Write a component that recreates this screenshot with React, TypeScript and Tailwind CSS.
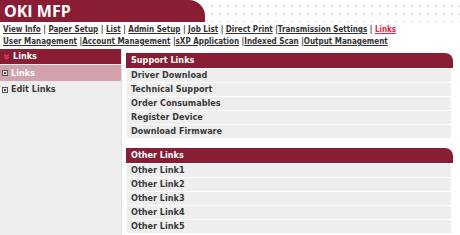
import React from "react";

const MAROON = "bg-[#881d33]";

const row1 = ["View Info", "Paper Setup", "List", "Admin Setup", "Job List", "Direct Print"];
const row2 = ["User Management", "Account Management", "sXP Application", "Indexed Scan", "Output Management"];

function NavLink({ children, active }: { children: React.ReactNode; active?: boolean }) {
  return (
    <a className={active ? "text-[#e8283f] underline" : "text-[#333] underline"} href="#">
      {children}
    </a>
  );
}

function BoxIcon() {
  return (
    <svg width="6" height="6" viewBox="0 0 6 6" className="shrink-0">
      <rect x="0.5" y="0.5" width="5" height="5" fill="#e8e8e8" stroke="#555" />
      <rect x="2" y="2" width="2" height="2" fill="#555" />
    </svg>
  );
}

function Panel({ title, items }: { title: string; items: string[] }) {
  return (
    <div className="flex flex-col">
      <div className={`${MAROON} h-[15px] rounded-tr-[8px] pl-[5px] text-white flex items-center`}>{title}</div>
      <div className="flex flex-col pr-[2px] pl-[1px]">
        {items.map((it) => (
          <div key={it} className="h-[13px] mt-[1px] bg-[#eeeeee] pl-[4px] flex items-center text-[#3a3a3a]">
            {it}
          </div>
        ))}
      </div>
    </div>
  );
}

export default function App() {
  return (
    <div
      className="w-[460px] h-[235px] bg-white overflow-hidden font-bold text-[9px] leading-none"
      style={{ fontFamily: '"DejaVu Sans Condensed", "DejaVu Sans", sans-serif' }}
    >
      <div className="flex h-[22px]">
        <div
          className={`${MAROON} w-[205px] rounded-tr-[16px] pl-[4px] flex items-center text-white text-[16px] font-['Open_Sans',sans-serif]`}
        >
          OKI MFP
        </div>
        <div className="flex-1 bg-[radial-gradient(#d8d8d8_0.8px,transparent_1px)] bg-[length:8px_8px] bg-[position:3px_2px]" />
      </div>

      <div className="px-[3px] pt-[2px] leading-[12px] text-[8px]">
        <div className="whitespace-nowrap">
          {row1.map((t) => (
            <span key={t}>
              <NavLink>{t}</NavLink>
              <span className="text-[#333]">{t === "Direct Print" ? " |" : " | "}</span>
            </span>
          ))}
          <NavLink>Transmission Settings</NavLink>
          <span className="text-[#333]"> | </span>
          <NavLink active>Links</NavLink>
        </div>
        <div className="whitespace-nowrap">
          {row2.map((t, i) => (
            <span key={t}>
              <NavLink>{t}</NavLink>
              {i < row2.length - 1 && <span className="text-[#333]"> |</span>}
            </span>
          ))}
        </div>
      </div>

      <div className="flex mt-[1px] h-[187px]">
        <div className="w-[122px] bg-[#eeeeee] border-r border-b border-[#e2e2e2] flex flex-col">
          <div className={`${MAROON} h-[15px] flex items-center gap-[4px] pl-[4px] text-white`}>
            <svg width="5" height="6" viewBox="0 0 5 6">
              <path d="M0 0.5 L2.5 2.5 L5 0.5 M0 3 L2.5 5 L5 3" fill="none" stroke="#f0405a" strokeWidth="1.3" />
            </svg>
            Links
          </div>
          <div className="h-[16px] bg-[#d3a2ab] flex items-center gap-[3px] pl-[2px] text-white mt-[1px]">
            <BoxIcon />
            Links
          </div>
          <div className="h-[17px] flex items-center gap-[3px] pl-[2px] text-[#3a3a3a]">
            <BoxIcon />
            Edit Links
          </div>
        </div>

        <div className="flex-1 pl-[4px] pr-[7px] pt-[4px] flex flex-col gap-[10px]">
          <Panel
            title="Support Links"
            items={["Driver Download", "Technical Support", "Order Consumables", "Register Device", "Download Firmware"]}
          />
          <Panel title="Other Links" items={["Other Link1", "Other Link2", "Other Link3", "Other Link4", "Other Link5"]} />
        </div>
      </div>
    </div>
  );
}
